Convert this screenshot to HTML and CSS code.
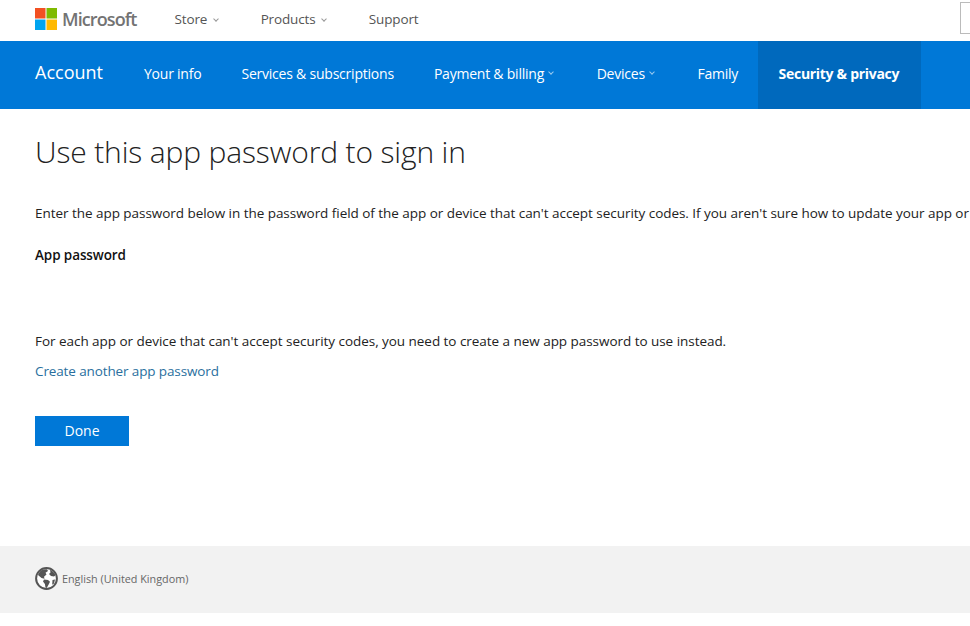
FILE: index.html
```html
<!DOCTYPE html>
<html lang="en">
<head>
    <meta charset="UTF-8">
    <title>Use this app password to sign in</title>
    <link rel="stylesheet" href="styles.css">
</head>
<body>
    <header class="top-bar">
        <a class="logo" href="#">
            <svg class="logo-mark" width="22" height="22" viewBox="0 0 22 22">
                <rect width="10.5" height="10.5" fill="#f25022"/>
                <rect x="11.5" width="10.5" height="10.5" fill="#7fba00"/>
                <rect y="11.5" width="10.5" height="10.5" fill="#00a4ef"/>
                <rect x="11.5" y="11.5" width="10.5" height="10.5" fill="#ffb900"/>
            </svg>
            <span class="logo-text">Microsoft</span>
        </a>
        <nav class="top-nav">
            <a href="#" class="top-link top-store">Store <span class="chev"></span></a>
            <a href="#" class="top-link top-products">Products <span class="chev"></span></a>
            <a href="#" class="top-link">Support</a>
        </nav>
        <div class="search-edge"></div>
    </header>

    <nav class="account-bar">
        <a href="#" class="account-title">Account</a>
        <a href="#" class="account-link">Your info</a>
        <a href="#" class="account-link">Services &amp; subscriptions</a>
        <a href="#" class="account-link">Payment &amp; billing <span class="chev"></span></a>
        <a href="#" class="account-link">Devices <span class="chev"></span></a>
        <a href="#" class="account-link">Family</a>
        <a href="#" class="account-link active">Security &amp; privacy</a>
    </nav>

    <main class="content">
        <h1>Use this app password to sign in</h1>
        <p class="intro">Enter the app password below in the password field of the app or device that can't accept security codes. If you aren't sure how to update your app or</p>
        <h2>App password</h2>
        <div class="password-blank"></div>
        <p class="note">For each app or device that can't accept security codes, you need to create a new app password to use instead.</p>
        <a href="#" class="another">Create another app password</a>
        <button class="done" type="button">Done</button>
    </main>

    <footer class="footer">
        <svg class="globe" width="23" height="23" viewBox="0 0 23 23">
            <circle cx="11.5" cy="11.5" r="10.4" fill="#fff" stroke="#555" stroke-width="2"/>
            <path d="M6 3.5c2-1 4-1.500 6-1.300l1 1.800-2.500 1.800 1 1.700-2.500 2.300.5 2-3-.8-3.500-3C3.500 6.500 4.500 4.800 6 3.500z" fill="#555"/>
            <path d="M15 2.800c2.500 1 4.500 3 5.500 5.500l-1.500 1.200-3-.5-2-2 1.500-1.500z" fill="#555"/>
            <path d="M9 12.500l4 .5 2 1.800-1.500 3-1.800 3.200-1.200-.4-.6-3.600-1.900-2.500z" fill="#555"/>
            <path d="M17.500 13l2.500-.5-1 4-1.800 1.200z" fill="#555"/>
        </svg>
        <span>English (United Kingdom)</span>
    </footer>
</body>
</html>
```
FILE: styles.css
```css
html, body {
    height: 100%;
}
body {
    margin: 0;
    font-family: "Open Sans", "Noto Sans", Arial, sans-serif;
    background: #fff;
    color: #222;
    overflow: hidden;
    display: flex;
    flex-direction: column;
}
a {
    text-decoration: none;
    color: inherit;
}

.top-bar {
    height: 41px;
    box-sizing: border-box;
    padding: 0 0 3px 35px;
    display: flex;
    align-items: center;
    flex-shrink: 0;
}
.logo {
    display: flex;
    align-items: center;
    gap: 5px;
}
.logo-text {
    font-size: 18px;
    font-weight: 600;
    letter-spacing: -0.9px;
    color: #737373;
}
.top-nav {
    display: flex;
    margin-left: 38px;
    font-size: 13.5px;
    color: #555;
}
.top-link {
    letter-spacing: -0.15px;
}
.top-store {
    margin-right: 39.5px;
}
.top-products {
    margin-right: 39.5px;
}
.chev {
    display: inline-block;
    width: 3px;
    height: 3px;
    margin: 0 3.5px 3px 3px;
    border-right: 1px solid currentColor;
    border-bottom: 1px solid currentColor;
    transform: rotate(45deg);
    opacity: 0.6;
}
.search-edge {
    width: 12px;
    height: 32px;
    margin: 0 -2px 3px auto;
    border: 1px solid #bbb;
    border-right: none;
    box-sizing: border-box;
}

.account-bar {
    height: 68px;
    box-sizing: border-box;
    padding-left: 35px;
    background: #0078d7;
    color: #fff;
    display: flex;
    align-items: stretch;
    font-size: 14px;
    flex-shrink: 0;
}
.account-title {
    font-size: 18px;
    align-self: center;
    margin-right: 21px;
    margin-bottom: 7px;
}
.account-link {
    display: flex;
    align-items: center;
    gap: 2px;
    padding: 0 20px 3px;
    letter-spacing: -0.22px;
    white-space: nowrap;
}
.account-link.active {
    padding-left: 20.5px;
    padding-right: 22px;
    background: #0069bd;
    font-weight: 700;
    letter-spacing: -0.3px;
}

.content {
    padding: 0 0 0 35px;
    flex: 1;
    white-space: nowrap;
}
h1 {
    margin: 22px 0 0;
    font-size: 30px;
    font-weight: 300;
    line-height: 42px;
    letter-spacing: -0.15px;
    color: #222;
}
.intro, .note {
    margin: 0;
    font-size: 13.5px;
    line-height: 18px;
    letter-spacing: -0.04px;
}
.intro {
    margin-top: 31px;
}
h2 {
    margin: 24px 0 0;
    font-size: 13.5px;
    font-weight: 600;
    line-height: 18px;
    letter-spacing: -0.1px;
    color: #111;
}
.password-blank {
    height: 68px;
}
.another {
    display: block;
    margin-top: 12px;
    font-size: 13.5px;
    line-height: 18px;
    letter-spacing: -0.12px;
    color: #2a6f9e;
}
.done {
    display: block;
    width: 94px;
    height: 30px;
    margin-top: 36px;
    padding: 0 0 2px;
    border: none;
    background: #0078d7;
    color: #fff;
    font: 14px "Open Sans", "Noto Sans", Arial, sans-serif;
}

.footer {
    height: 67px;
    box-sizing: border-box;
    margin-bottom: 13px;
    padding: 0 0 3px 35px;
    background: #f2f2f2;
    color: #666;
    display: flex;
    align-items: center;
    gap: 4px;
    font-size: 10.8px;
    flex-shrink: 0;
}
.globe {
    flex-shrink: 0;
}
```
